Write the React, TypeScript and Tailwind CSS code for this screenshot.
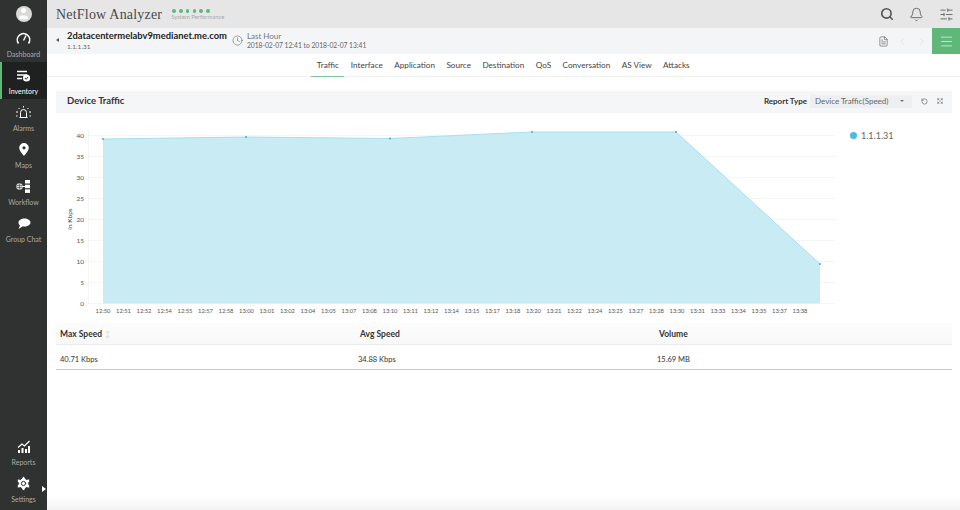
import { Bell, ChevronLeft, ChevronRight, Clock, Expand, FileText, Menu, RotateCw, Search, Settings, SlidersHorizontal, User } from "lucide-react"
import type { ReactNode } from "react"

const times = [
  "12:50", "12:51", "12:52", "12:54", "12:55", "12:57", "12:58",
  "13:00", "13:01", "13:02", "13:04", "13:05", "13:07", "13:08",
  "13:10", "13:11", "13:12", "13:14", "13:15", "13:17", "13:18",
  "13:20", "13:21", "13:22", "13:24", "13:25", "13:27", "13:28",
  "13:30", "13:31", "13:33", "13:34", "13:35", "13:37", "13:38",
]
const tabs = ["Traffic", "Interface", "Application", "Source", "Destination", "QoS", "Conversation", "AS View", "Attacks"]
const points = [[103, 139], [246, 137], [390, 138.5], [532, 132], [676, 132], [820, 264]]
const line = points.map((p) => p.join(",")).join(" ")

function NavItem({ icon, label, active }: { icon: ReactNode; label: string; active?: boolean }) {
  return (
    <div className={`flex h-[37px] flex-col items-center justify-center border-l-2 pr-0.5 ${active ? "border-[#5fb77a] bg-[#1f2120] text-white" : "border-transparent text-[#a9abaa]"}`}>
      <div className="flex h-[20px] items-center text-white">{icon}</div>
      <span className="text-[7px] leading-[10px]">{label}</span>
    </div>
  )
}

function Sidebar() {
  return (
    <aside className="flex h-full w-[47px] shrink-0 flex-col bg-[#303231] pb-[3px]">
      <div className="flex h-[25px] items-center justify-center pt-0.5">
        <div className="flex h-[16px] w-[16px] items-center justify-center overflow-hidden rounded-full bg-[#d9d9d7] text-white">
          <User size={15} fill="#fff" strokeWidth={0} />
        </div>
      </div>
      <div className="flex flex-col">
        <NavItem
          label="Dashboard"
          icon={
            <svg width="15" height="13" viewBox="0 0 15 13" fill="none" stroke="#fff">
              <path d="M2.5 11.5a6.2 6.2 0 1 1 10 0" strokeWidth="1.6" />
              <path d="M7.5 8.5L10 3.5" strokeWidth="1.4" />
            </svg>
          }
        />
        <NavItem
          active
          label="Inventory"
          icon={
            <svg width="14" height="12" viewBox="0 0 14 12" fill="none">
              <path d="M0 1.5h10M0 5h10M0 8.5h5" stroke="#fff" strokeWidth="1.3" />
              <circle cx="9.5" cy="8" r="3.6" fill="#fff" />
              <path d="M7.8 8l1.3 1.3 2-2.3" stroke="#1f2120" strokeWidth="1" />
            </svg>
          }
        />
        <NavItem
          label="Alarms"
          icon={
            <svg width="17" height="14" viewBox="0 0 17 14" fill="none" stroke="#fff" strokeWidth="1">
              <path d="M5.5 11V6.5a3 3 0 0 1 6 0V11M4.5 11.5h8" />
              <path d="M8.5 0v1.5M3.5 2l1 1M13.5 2l-1 1M1 6h2M14 6h2M1 10h1.5M14.5 10H16" />
            </svg>
          }
        />
        <NavItem
          label="Maps"
          icon={
            <svg width="10" height="13" viewBox="0 0 10 13">
              <path fillRule="evenodd" fill="#fff" d="M5 0a4.8 4.8 0 0 1 4.8 4.8C9.8 8 5 13 5 13S.2 8 .2 4.8A4.8 4.8 0 0 1 5 0zm0 3.2a1.6 1.6 0 1 0 0 3.2 1.6 1.6 0 0 0 0-3.2z" />
            </svg>
          }
        />
        <NavItem
          label="Workflow"
          icon={
            <svg width="15" height="13" viewBox="0 0 15 13" fill="#fff">
              <circle cx="3.5" cy="6.5" r="3.2" fill="#d5d5d5" />
              <path d="M1 5.500h5M1 7.500h5M3.500 3.500v6" stroke="#303231" strokeWidth="0.5" />
              <rect x="9" y="0" width="5" height="3.5" />
              <rect x="9" y="4.7" width="5" height="3.5" />
              <rect x="9" y="9.4" width="5" height="3.5" />
              <path d="M6 6h3v1H6z" />
            </svg>
          }
        />
        <NavItem
          label="Group Chat"
          icon={
            <svg width="14" height="12" viewBox="0 0 14 12" fill="#fff">
              <path d="M7.5 0.5c3.3 0 6 1.700 6 4s-2.700 4-6 4c-.6 0-1.200 0-1.700-.2L1.500 11 3 7.500C2 6.800 1.500 5.700 1.500 4.500c0-2.300 2.700-4 6-4z" />
            </svg>
          }
        />
      </div>
      <div className="mt-auto flex flex-col">
        <NavItem
          label="Reports"
          icon={
            <svg width="14" height="13" viewBox="0 0 14 13" fill="none">
              <path d="M1 7.500L5 4l2.500 2L12.500 1" stroke="#fff" strokeWidth="1.2" />
              <path fill="#fff" d="M1 10h2v3H1zM4.500 8h2v5h-2zM8 9h2v4H8zM11 6h2v7h-2z" />
            </svg>
          }
        />
        <div className="relative">
          <NavItem label="Settings" icon={<Settings size={17} fill="#fff" stroke="#303231" strokeWidth={1.4} />} />
          <div className="absolute right-[1px] top-[16px] h-0 w-0 border-y-[3px] border-l-[4px] border-y-transparent border-l-white" />
        </div>
      </div>
    </aside>
  )
}

function Chart() {
  return (
    <svg viewBox="56 120 896 200" className="h-[200px] w-[896px]">
      {[0, 5, 10, 15, 20, 25, 30, 35, 40].map((v) => {
        const y = 303.5 - v * 4.2
        return (
          <g key={v}>
            <line x1="88" x2="835" y1={y} y2={y} stroke="#f1f1f1" strokeWidth="0.7" />
            <text x="84" y={y + 2} textAnchor="end" fontSize="6.500" fill="#555">{v}</text>
          </g>
        )
      })}
      <line x1="88.500" x2="88.500" y1="130" y2="304" stroke="#f1f1f1" strokeWidth="0.7" />
      <text transform="translate(72 219) rotate(-90)" textAnchor="middle" fontSize="6.500" fill="#444">in Kbps</text>
      <polygon points={`103,303.500 ${line} 820,303.500`} fill="#c9ebf4" />
      <polyline points={line} fill="none" stroke="#a8dff0" strokeWidth="1" />
      {points.map((p) => (
        <circle key={p[0]} cx={p[0]} cy={p[1]} r="0.9" fill="#4a9fbb" />
      ))}
      {times.map((t, i) => (
        <text key={t} x={103 + i * 20.5} y="312.500" textAnchor="middle" fontSize="5.800" fill="#555">{t}</text>
      ))}
    </svg>
  )
}

export default function App() {
  return (
    <div className="flex h-[510px] w-[960px] overflow-hidden bg-white font-['Lato','Open_Sans',sans-serif] text-[#333]">
      <Sidebar />
      <main className="flex min-w-0 flex-1 flex-col">
        <header className="flex h-[28px] shrink-0 items-center bg-[#e6e6e6] pl-[9px] pr-[6px]">
          <span className="font-['Liberation_Serif',serif] text-[14px] tracking-[0.2px] text-[#4a4a4a]">NetFlow Analyzer</span>
          <div className="ml-[9px] flex flex-col pt-[2px]">
            <div className="flex gap-[3.300px] pl-[1px]">
              {[0, 1, 2, 3, 4, 5].map((i) => (
                <span key={i} className="h-[3.500px] w-[3.500px] rounded-full bg-[#5cb87c]" />
              ))}
            </div>
            <span className="text-[5.900px] leading-[8px] text-[#aaa]">System Performance</span>
          </div>
          <div className="ml-auto flex items-center gap-[15px] text-[#555]">
            <Search size={14} strokeWidth={2.800} />
            <Bell size={15} strokeWidth={1.300} />
            <SlidersHorizontal size={15} strokeWidth={1.300} />
          </div>
        </header>

        <div className="flex h-[26px] shrink-0 items-center bg-[#f4f5f7] pb-[2px]">
          <span className="ml-[9px] h-0 w-0 border-y-[2.500px] border-r-[3px] border-y-transparent border-r-[#555]" />
          <div className="ml-[8px] flex flex-col">
            <span className="text-[9.400px] font-bold leading-[12px] text-[#222]">2datacentermelabv9medianet.me.com</span>
            <span className="text-[6.500px] leading-[9px] text-[#666]">1.1.1.31</span>
          </div>
          <Clock size={11} strokeWidth={1} className="ml-[5px] text-[#444]" />
          <div className="ml-[4px] flex flex-col">
            <span className="text-[8px] leading-[10px] text-[#777]">Last Hour</span>
            <span className="text-[6.700px] leading-[9px] text-[#666]">2018-02-07 12:41 to 2018-02-07 13:41</span>
          </div>
          <div className="ml-auto -mb-[2px] flex items-center text-[#ddd]">
            <FileText size={11} strokeWidth={1.300} className="text-[#555]" />
            <ChevronLeft size={13} strokeWidth={1.300} className="ml-[7px]" />
            <ChevronRight size={13} strokeWidth={1.300} className="ml-[6px]" />
            <div className="ml-[4px] flex h-[26px] w-[28px] items-center justify-center bg-[#5fb77a] text-white">
              <Menu size={15} strokeWidth={1} />
            </div>
          </div>
        </div>

        <nav className="flex h-[23px] shrink-0 items-stretch justify-center gap-[11.400px] border-b border-[#f0f0f0] pr-[6px] text-[8.200px] text-[#444]">
          {tabs.map((t, i) => (
            <span key={t} className={`-mb-px flex items-center border-b ${i === 0 ? "-mr-[5px] border-[#7cc795] px-[5.500px]" : "border-transparent"}`}>{t}</span>
          ))}
        </nav>

        <div className="flex min-h-0 flex-1 flex-col pl-[9px] pr-[8px] pt-[14px]">
          <div className="flex h-[22px] shrink-0 items-center bg-[#f5f6f8] pl-[11px]">
            <span className="pb-[1px] text-[9.500px] font-bold text-[#333]">Device Traffic</span>
            <div className="ml-auto flex items-center pb-[2px]">
              <span className="text-[8px] font-bold text-[#333]">Report Type</span>
              <div className="ml-[3px] flex h-[13px] w-[102px] items-center bg-[#eeeff0] pl-[5px] text-[8px] text-[#666]">
                Device Traffic(Speed)
                <span className="ml-[12px] h-0 w-0 border-x-[2px] border-t-[2.500px] border-x-transparent border-t-[#777]" />
              </div>
              <RotateCw size={7} className="ml-[9px] scale-x-[-1] text-[#555]" />
              <Expand size={6} className="ml-[9px] mr-[9px] text-[#555]" />
            </div>
          </div>

          <div className="relative h-[210px] shrink-0 pt-[7px]">
            <Chart />
            <div className="absolute left-[794px] top-[16px] flex items-center gap-[4px] text-[9px] text-[#666]">
              <span className="h-[7px] w-[7px] rounded-full bg-[#4cbcdc]" />
              1.1.1.31
            </div>
          </div>

          <div className="grid h-[22px] shrink-0 grid-cols-[300px_299px_1fr] items-center border-b border-[#ececec] bg-gradient-to-b from-[#fcfcfc] to-[#f8f8f8] pl-[4px] pt-[1px] text-[8.500px] font-bold text-[#333]">
            <span>Max Speed <span className="font-normal text-[#ddd]">↕</span></span>
            <span>Avg Speed</span>
            <span>Volume</span>
          </div>
          <div className="grid h-[25px] shrink-0 grid-cols-[298px_299px_1fr] items-center border-b border-[#c9c9c9] pl-[4px] pt-[6px] text-[7.500px] text-[#333]">
            <span>40.71 Kbps</span>
            <span>34.88 Kbps</span>
            <span>15.69 MB</span>
          </div>
          <div className="-mx-[9px] mt-auto h-[14px] bg-gradient-to-b from-white to-[#f3f3f3]" />
        </div>
      </main>
    </div>
  )
}
